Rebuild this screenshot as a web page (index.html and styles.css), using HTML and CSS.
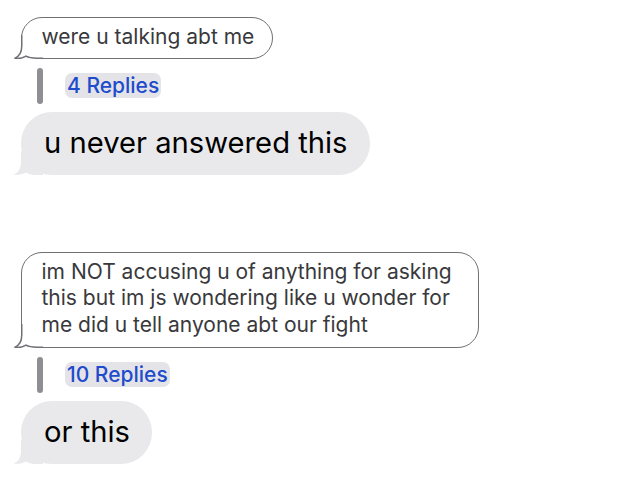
FILE: index.html
```html
<!DOCTYPE html>
<html>
<head>
<meta charset="utf-8">
<link rel="stylesheet" href="styles.css">
</head>
<body>
<div class="thread">
  <div class="bubble outline">
    <span class="text">were u talking abt me</span>
    <svg class="tail" width="30" height="24" viewBox="0 0 30 24"><rect x="7" y="0" width="23" height="24" fill="#fff"/><path d="M8.75,0 V11 C8.75,17 6.5,21.5 1.5,23.4 C6,24 10,23 13,21.2 C15.5,22.7 19,23.25 24,23.25 H30" fill="#fff" stroke="#707075" stroke-width="1.5"/></svg>
  </div>
  <div class="reply">
    <span class="bar"></span>
    <span class="replies">4 Replies</span>
  </div>
  <div class="bubble filled">
    <span class="text">u never answered this</span>
    <svg class="tail" width="30" height="24" viewBox="0 0 30 24"><path d="M8,0 V11 C8,17 5.5,21.8 0.5,23.6 C5,24.3 10,23 13,21.4 C15.5,23 19,24 26,24 H30 V0 Z" fill="#e9e9eb"/></svg>
  </div>
  <div class="bubble outline wrapped gap-top">
    <span class="text">im NOT accusing u of anything for asking<br>this but im js wondering like u wonder for<br>me did u tell anyone abt our fight</span>
    <svg class="tail" width="30" height="24" viewBox="0 0 30 24"><rect x="7" y="0" width="23" height="24" fill="#fff"/><path d="M8.75,0 V11 C8.75,17 6.5,21.5 1.5,23.4 C6,24 10,23 13,21.2 C15.5,22.7 19,23.25 24,23.25 H30" fill="#fff" stroke="#707075" stroke-width="1.5"/></svg>
  </div>
  <div class="reply">
    <span class="bar"></span>
    <span class="replies">10 Replies</span>
  </div>
  <div class="bubble filled">
    <span class="text">or this</span>
    <svg class="tail" width="30" height="24" viewBox="0 0 30 24"><path d="M8,0 V11 C8,17 5.5,21.8 0.5,23.6 C5,24.3 10,23 13,21.4 C15.5,23 19,24 26,24 H30 V0 Z" fill="#e9e9eb"/></svg>
  </div>
</div>
</body>
</html>
```
FILE: styles.css
```css
html, body {
  margin: 0;
  padding: 0;
  background: #ffffff;
}
body {
  width: 640px;
  height: 479px;
  overflow: hidden;
  font-family: Inter, "Noto Sans", "Liberation Sans", sans-serif;
}
.thread {
  display: flex;
  flex-direction: column;
  align-items: flex-start;
  padding: 17px 0 0 21px;
}
.bubble {
  position: relative;
  box-sizing: border-box;
}
.bubble .text {
  position: relative;
  z-index: 1;
  display: block;
}
.outline {
  border: 1.5px solid #707075;
  border-radius: 21px;
  padding: 6px 18px 7px 19.5px;
  font-size: 21px;
  line-height: 26.7px;
  color: #39393c;
  background: #fff;
}
.outline.wrapped {
  padding-right: 26px;
  padding-bottom: 8px;
}
.outline .tail {
  position: absolute;
  left: -9.5px;
  bottom: -1.5px;
}
.filled {
  background: #e9e9eb;
  border-radius: 31px;
  padding: 13px 22px 14px 23px;
  font-size: 29.2px;
  line-height: 36px;
  color: #000;
  margin-top: 8px;
}
.filled .tail {
  position: absolute;
  left: -8px;
  bottom: 0;
}
.gap-top {
  margin-top: 77px;
}
.reply {
  display: flex;
  align-items: center;
  height: 36px;
  margin-top: 9px;
}
.bar {
  width: 6px;
  height: 36px;
  border-radius: 3px;
  background: #8e8e93;
  margin-left: 16px;
}
.replies {
  margin-left: 22px;
  background: #e4e4e8;
  border-radius: 7px;
  padding: 0 2px;
  height: 25px;
  line-height: 25px;
  font-size: 21px;
  color: #1f4ccc;
  font-weight: 500;
}
```
